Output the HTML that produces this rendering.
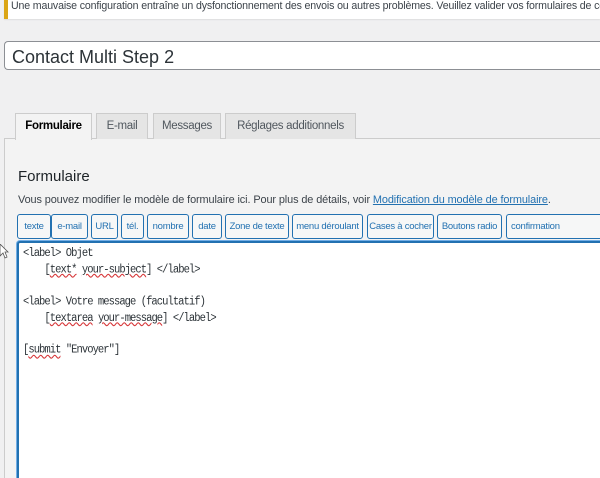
<!DOCTYPE html>
<html><head><meta charset="utf-8"><style>
html,body{margin:0;width:600px;height:478px;overflow:hidden}
body{background:#f0f0f1;font-family:"Liberation Sans",sans-serif;position:relative}
.abs{position:absolute}
.notice{left:4px;top:-4px;width:596px;height:23px;background:#fff;border-left:4px solid #dba617;box-shadow:0 1px 1px rgba(0,0,0,.08);font-size:10.6px;letter-spacing:-0.15px;color:#3c434a;line-height:14px;padding-top:3px;box-sizing:border-box;padding-left:3px;white-space:nowrap;overflow:hidden}
.title{left:4px;top:41px;width:596px;height:29px;background:#fff;border:1px solid #8c8f94;border-right:none;border-radius:4px 0 0 4px;box-sizing:border-box;font-size:18px;color:#2c3338;padding:5px 0 0 7px;white-space:nowrap}
.panel{left:4px;top:138px;width:596px;height:340px;background:#f3f3f3;border:1px solid #ccc;border-right:none;border-bottom:none;box-sizing:border-box}
.tab{top:113px;height:26px;background:#e5e5e5;border:1px solid #ccc;border-bottom:none;box-sizing:border-box;font-size:11.5px;letter-spacing:-0.3px;color:#50575e;text-align:center;line-height:25px;white-space:nowrap}
.tab.act{background:#f3f3f3;color:#000;font-weight:bold;height:27px;z-index:2}
h2{position:absolute;left:18px;top:168px;margin:0;font-size:15px;font-weight:normal;color:#1d2327}
.desc{left:18px;top:194px;font-size:10.9px;letter-spacing:-0.1px;color:#3c434a;white-space:nowrap}
.desc a{color:#2271b1;text-decoration:underline}
.btn{top:214px;height:25px;border:1px solid #2271b1;border-radius:3px;background:#f6f7f7;color:#2271b1;font-size:9.5px;letter-spacing:-0.25px;text-align:center;line-height:23px;box-sizing:border-box;white-space:nowrap;overflow:hidden}
.ta{left:17px;top:241px;width:590px;height:250px;background:#fff;border:2px solid #2271b1;border-radius:3px;box-sizing:border-box;box-shadow:0 0 0 1px #72aee6}
pre{position:absolute;left:23px;top:246px;margin:0;font-family:"Liberation Mono",monospace;font-size:10.5px;letter-spacing:-0.95px;line-height:14.7px;color:#2c3338;transform:scaleY(1.1);transform-origin:0 0}
.sp{text-decoration:underline wavy #d63638;text-decoration-thickness:1px}
</style></head><body>
<div class="abs notice">Une mauvaise configuration entraîne un dysfonctionnement des envois ou autres problèmes. Veuillez valider vos formulaires de contact.</div>
<div class="abs title">Contact Multi Step 2</div>
<div class="abs panel"></div>
<div class="abs tab act" style="left:15px;width:77px">Formulaire</div>
<div class="abs tab" style="left:96px;width:52px">E-mail</div>
<div class="abs tab" style="left:153px;width:68px">Messages</div>
<div class="abs tab" style="left:225px;width:131px">Réglages additionnels</div>
<h2>Formulaire</h2>
<div class="abs desc">Vous pouvez modifier le modèle de formulaire ici. Pour plus de détails, voir <a>Modification du modèle de formulaire</a>.</div>
<div class="abs btn" style="left:17px;width:34px">texte</div>
<div class="abs btn" style="left:51px;width:37px">e-mail</div>
<div class="abs btn" style="left:91px;width:27px">URL</div>
<div class="abs btn" style="left:121px;width:23px">tél.</div>
<div class="abs btn" style="left:147px;width:42px">nombre</div>
<div class="abs btn" style="left:192px;width:30px">date</div>
<div class="abs btn" style="left:225px;width:64px">Zone de texte</div>
<div class="abs btn" style="left:292px;width:71px">menu déroulant</div>
<div class="abs btn" style="left:367px;width:67px">Cases à cocher</div>
<div class="abs btn" style="left:437px;width:65px">Boutons radio</div>
<div class="abs btn" style="left:506px;width:94px;text-align:left;padding-left:4px;border-right:none;border-radius:3px 0 0 3px">confirmation</div>
<div class="abs ta"></div>
<pre>&lt;label&gt; Objet
    [<span class="sp">text*</span> <span class="sp">your-subject</span>] &lt;/label&gt;

&lt;label&gt; Votre message (facultatif)
    [<span class="sp">textarea</span> <span class="sp">your-message</span>] &lt;/label&gt;

[<span class="sp">submit</span> "Envoyer"]</pre>
<svg class="abs" style="left:0;top:244px" width="10" height="16" viewBox="0 0 10 16"><path d="M0 0 L8 8 L5 8 L7 13 L5 14 L3 9 L0 12 Z" fill="#fff" stroke="#555" stroke-width="0.8"/></svg>
</body></html>
